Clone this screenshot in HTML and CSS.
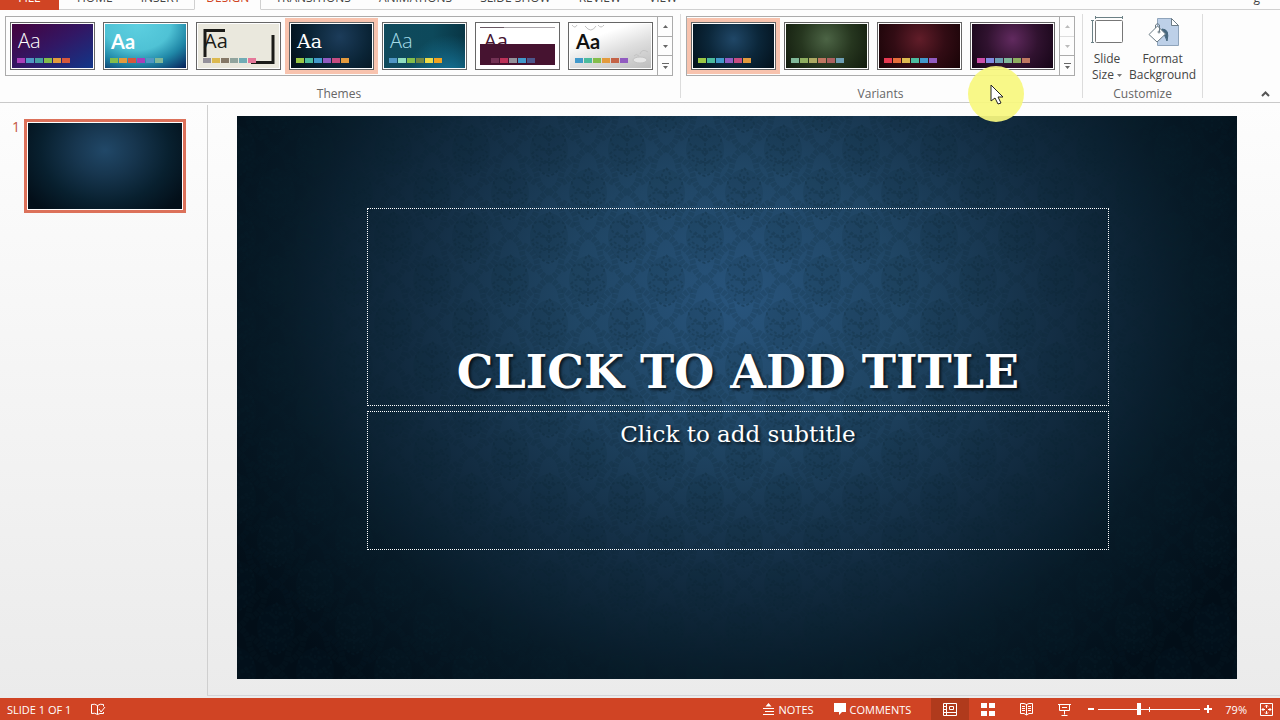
FILE: index.html
```
<!DOCTYPE html>
<html lang="en">
<head>
    <meta charset="UTF-8">
    <meta name="viewport" content="width=device-width, initial-scale=1.0">
    <title>Presentation</title>
    <link rel="stylesheet" href="styles.css">
</head>
<body>
    <nav class="tabs">
        <a href="#" class="tab file">FILE</a>
        <a href="#" class="tab">HOME</a>
        <a href="#" class="tab">INSERT</a>
        <a href="#" class="tab active">DESIGN</a>
        <a href="#" class="tab">TRANSITIONS</a>
        <a href="#" class="tab">ANIMATIONS</a>
        <a href="#" class="tab">SLIDE SHOW</a>
        <a href="#" class="tab">REVIEW</a>
        <a href="#" class="tab">VIEW</a>
        <a href="#" class="tab account">g</a>
    </nav>

    <header class="ribbon">
        <section class="group">
            <div class="gallery">
                <button class="item" aria-label="Ion Boardroom"><span class="thumb ion"><b>Aa</b><span class="swatches"><i class="c-purple"></i><i class="c-blue"></i><i class="c-teal"></i><i class="c-green"></i><i class="c-orange"></i><i class="c-red"></i></span></span></button>
                <button class="item" aria-label="Celestial"><span class="thumb sky"><b>Aa</b><span class="swatches"><i class="c-green"></i><i class="c-orange"></i><i class="c-red"></i><i class="c-purple"></i><i class="c-blue"></i><i class="c-sage"></i></span></span></button>
                <button class="item" aria-label="Frame"><span class="thumb frame"><svg class="art" viewBox="0 0 81 44"><path d="M27 6.500H7V33M53 38.500h22V11" fill="none" stroke="#1b1b18" stroke-width="3"/></svg><b>Aa</b><span class="swatches"><i class="c-gray"></i><i class="c-gold"></i><i class="c-brown"></i><i class="c-ash"></i><i class="c-aqua"></i><i class="c-rose"></i></span></span></button>
                <button class="item selected" aria-label="Damask"><span class="thumb damask"><b>Aa</b><span class="swatches"><i class="c-lime"></i><i class="c-mint"></i><i class="c-azure"></i><i class="c-violet"></i><i class="c-pink"></i><i class="c-orange"></i></span></span></button>
                <button class="item" aria-label="Depth"><span class="thumb depth"><b>Aa</b><span class="swatches"><i class="c-blue"></i><i class="c-pale"></i><i class="c-green"></i><i class="c-olive"></i><i class="c-yellow"></i><i class="c-amber"></i></span></span></button>
                <button class="item" aria-label="Dividend"><span class="thumb dividend"><b>Aa</b><svg class="art" viewBox="0 0 81 44"><path d="M3 3.500h75" stroke="#aaa5a9"/><path d="M3 3.500h24" stroke="#685762"/><path d="M3 20h75v21H3z" fill="#461330"/></svg><span class="swatches"><i class="c-plum"></i><i class="c-crimson"></i><i class="c-gray"></i><i class="c-azure"></i><i class="c-indigo"></i></span></span></button>
                <button class="item" aria-label="Droplet"><span class="thumb droplet"><svg class="art" viewBox="0 0 81 44" fill="none" stroke="#c3c3c3"><path d="M2 1q3 4 5 0M15 2q6 8 11 0M28 1q3 4 6 0M64 32q2-3 5 0M70 30q2-6 8-2"/><ellipse cx="70" cy="36" rx="7" ry="3" fill="#e6e6e6"/></svg><b>Aa</b><span class="swatches"><i class="c-azure"></i><i class="c-mint"></i><i class="c-green"></i><i class="c-orange"></i><i class="c-rust"></i><i class="c-violet"></i></span></span></button>
                <div class="scroller">
                    <button aria-label="Previous themes"><svg width="5" height="3"><path d="M0 3L2.500 0L5 3z"/></svg></button>
                    <button aria-label="Next themes"><svg width="5" height="3"><path d="M0 0h5L2.500 3z"/></svg></button>
                    <button aria-label="More themes"><svg width="7" height="6"><path d="M0 0h7v1H0zM1 3h5L3.500 6z"/></svg></button>
                </div>
            </div>
            <h2>Themes</h2>
        </section>

        <section class="group">
            <div class="gallery">
                <button class="item selected" aria-label="Blue variant"><span class="thumb v-blue"><span class="swatches"><i class="c-lime"></i><i class="c-mint"></i><i class="c-azure"></i><i class="c-violet"></i><i class="c-pink"></i><i class="c-orange"></i></span></span></button>
                <button class="item" aria-label="Green variant"><span class="thumb v-green"><span class="swatches"><i class="c-sage"></i><i class="c-moss"></i><i class="c-khaki"></i><i class="c-clay"></i><i class="c-brick"></i><i class="c-steel"></i></span></span></button>
                <button class="item" aria-label="Red variant"><span class="thumb v-red"><span class="swatches"><i class="c-scarlet"></i><i class="c-tangerine"></i><i class="c-gold"></i><i class="c-mint"></i><i class="c-azure"></i><i class="c-violet"></i></span></span></button>
                <button class="item" aria-label="Purple variant"><span class="thumb v-purple"><span class="swatches"><i class="c-magenta"></i><i class="c-peri"></i><i class="c-steel"></i><i class="c-sage"></i><i class="c-moss"></i><i class="c-clay"></i></span></span></button>
                <div class="scroller">
                    <button disabled aria-label="Previous variants"><svg width="5" height="3"><path d="M0 3L2.500 0L5 3z"/></svg></button>
                    <button disabled aria-label="Next variants"><svg width="5" height="3"><path d="M0 0h5L2.500 3z"/></svg></button>
                    <button aria-label="More variants"><svg width="7" height="6"><path d="M0 0h7v1H0zM1 3h5L3.500 6z"/></svg></button>
                </div>
            </div>
            <h2>Variants</h2>
        </section>

        <section class="group customize">
            <div class="tools">
                <button class="tool">
                    <svg width="34" height="32" viewBox="0 0 34 32" fill="none" stroke="#6b8085">
                        <rect x="5.500" y="4.500" width="27" height="22" rx="1" fill="#fff" stroke="#777"/>
                        <path d="M5 1.500h28M5.500 0v3M32.500 0v3M2.500 4v23M1 4.500h3M1 26.500h3"/>
                    </svg>
                    <span>Slide<br>Size <svg width="5" height="3"><path d="M0 0h5L2.500 3z" fill="#777"/></svg></span>
                </button>
                <button class="tool">
                    <svg width="34" height="32" viewBox="0 0 34 32" fill="none" stroke="#6b7b85">
                        <path d="M11.500 2.500h14l7 7v20h-21z" fill="#bdd0e8" stroke="#8fa4bb"/>
                        <path d="M25.500 2.500v7h7z" fill="#fff"/>
                        <path d="M16 13q8 0 5 12q-1-6-6-8z" fill="#47677e" stroke="#47677e"/>
                        <path d="M3 18.500l8.500-8.500 8 8-8.500 8z" fill="#fff"/>
                        <path d="M9.500 12V9q2-3 4 0v7"/>
                        <circle cx="13" cy="16" r="1"/>
                    </svg>
                    <span>Format<br>Background</span>
                </button>
            </div>
            <h2>Customize</h2>
        </section>
        <button class="collapse" aria-label="Collapse the ribbon"><svg width="9" height="6" viewBox="0 0 9 6"><path d="M1 5l3.500-3.500L8 5" fill="none" stroke="#555" stroke-width="2"/></svg></button>
    </header>

    <div class="workspace">
        <aside class="slides">
            <span class="number">1</span>
            <button class="preview" aria-label="Slide 1"></button>
        </aside>
        <main class="stage">
            <div class="slide">
                <svg class="pattern" width="100%" height="100%" aria-hidden="true">
                    <defs>
                        <g id="motif" fill="none" stroke="#06202c">
                            <ellipse cy="1" rx="19" ry="24" fill="#06202c" stroke="none" opacity="0.4"/>
                            <g stroke-width="2" stroke-dasharray="3 2">
                                <path d="M0-24q8 8 0 15q-8-7 0-15M0-8q12-12 16-2q1 9-16 10q-17-1-16-10q4-10 16 2M0 3q12-6 17 2q-2 9-17 8q-15 1-17-8q5-8 17-2M0 14q9-1 10 5q-3 6-10 8q-7-2-10-8q1-6 10-5"/>
                                <path d="M0-16v40M-10-4L0 6l10-10M-13 6L0 15l13-9M-7-15l7 7 7-7"/>
                            </g>
                            <path d="M-39 0q10-4 12-16q2-12 14-18M39 0q-10-4-12-16q-2-12-14-18M-39 0q10 4 12 16q2 12 14 18M39 0q-10 4-12 16q-2 12-14 18" stroke-width="6" stroke-dasharray="4 1" opacity="0.5"/>
                        </g>
                        <pattern id="damask" width="78" height="87" patternUnits="userSpaceOnUse" x="390" y="33">
                            <use href="#motif" x="39" y="43"/>
                            <use href="#motif"/>
                            <use href="#motif" x="78"/>
                            <use href="#motif" y="87"/>
                            <use href="#motif" x="78" y="87"/>
                        </pattern>
                    </defs>
                    <rect width="100%" height="100%" fill="url(#damask)" opacity="0.3"/>
                </svg>
                <div class="placeholder title"><h1>CLICK TO ADD TITLE</h1></div>
                <div class="placeholder subtitle"><p>Click to add subtitle</p></div>
            </div>
        </main>
    </div>

    <footer class="status">
        <span>SLIDE 1 OF 1</span>
        <button class="spelling" aria-label="Spelling"><svg width="15" height="13" viewBox="0 0 15 13" fill="none" stroke="#fff"><path d="M6.500 2.500Q4 .5.500 1.500v9q3.500-1 6 1zM6.500 2.500Q9 .5 12.500 1.500v2M6.500 11.500q2-1.500 6-1V9M8 6l2 3 4-5"/></svg></button>
        <div class="status-right">
            <button class="notes"><svg width="11" height="12" viewBox="0 0 11 12"><path d="M2.500 3.500L5.500 0l3 3.500zM0 5h11v1H0zM2 8h9v1H2zM0 11h11v1H0z" fill="#fff"/></svg>NOTES</button>
            <button class="comments"><svg width="12" height="12" viewBox="0 0 12 12"><path d="M0 0h12v9H8l-3 3V9H0z" fill="#fff"/></svg>COMMENTS</button>
            <div class="views">
                <button class="active" aria-label="Normal"><svg width="14" height="13" viewBox="0 0 14 13" fill="none" stroke="#fff"><path d="M.5.500h13v12H.5zM3.500 1v11M3.500 9.500h10"/><path d="M6.500 3.500h4v3h-4z"/><path d="M1 3.500h2M1 6.500h2M1 9.500h2"/></svg></button>
                <button aria-label="Slide sorter"><svg width="14" height="13" viewBox="0 0 14 13" fill="#fff"><path d="M0 0h6v5H0zM8 0h6v5H8zM0 8h6v5H0zM8 8h6v5H8z"/></svg></button>
                <button aria-label="Reading view"><svg width="13" height="13" viewBox="0 0 13 13" fill="none" stroke="#fff"><path d="M6.500 1.500L4 .5H.5v10H4l2.500 1.500L9 10.500h3.500V.5H9zM6.500 1v11M2 3.500h3M2 5.500h3M2 7.500h3M8 3.500h3M8 5.500h3M8 7.500h3"/></svg></button>
                <button aria-label="Slide show"><svg width="13" height="13" viewBox="0 0 13 13" fill="none" stroke="#fff"><path d="M0 1.500h13M1.500 2v5.500h10V2M6.500 7.500v4M3.500 12.500h6M4 4.500h5"/></svg></button>
            </div>
            <button class="step" aria-label="Zoom out"><svg width="6" height="10"><path d="M0 4h6v2H0z" fill="#fff"/></svg></button>
            <input type="range" class="zoom" min="0" max="100" value="39" aria-label="Zoom">
            <button class="step" aria-label="Zoom in"><svg width="8" height="8"><path d="M0 3h3V0h2v3h3v2H5v3H3V5H0z" fill="#fff"/></svg></button>
            <button class="percent">79%</button>
            <button class="fit" aria-label="Fit slide to window"><svg width="13" height="13" viewBox="0 0 13 13" fill="none" stroke="#fff"><path d="M.5.500h12v12H.5zM6.500 2v3M6.500 8v3M2 6.500h3M8 6.500h3M5 3.500l1.500-1.500 1.500 1.500M5 9.500l1.500 1.500 1.500-1.500M3.500 5l-1.500 1.500 1.500 1.500M9.500 5l1.500 1.500-1.500 1.500"/></svg></button>
        </div>
    </footer>

    <div class="pointer">
        <svg width="56" height="56" viewBox="0 0 56 56">
            <circle cx="28" cy="28" r="28" fill="#f8f77f" opacity="0.93"/>
            <path d="M23 19v16l4-3 3 6 3-1-3-6h5z" fill="#fff" stroke="#222"/>
        </svg>
    </div>
</body>
</html>
```

FILE: styles.css
```
* {
    box-sizing: border-box;
}

body {
    display: flex;
    flex-direction: column;
    min-height: 100vh;
    margin: 0;
    font-family: "Open Sans", "Noto Sans", sans-serif;
    font-size: 12px;
    color: #444;
    background-color: #fdfdfd;
}

button {
    padding: 0;
    border: none;
    background: none;
    font: inherit;
    color: inherit;
}

svg {
    display: block;
}

/* Ribbon tabs, scrolled up so only the bottom edge is left */
.tabs {
    display: flex;
    align-items: flex-end;
    height: 10px;
    overflow: hidden;
}

.tab {
    height: 24px;
    padding: 0 14px;
    border-bottom: 1px solid #d0d0d0;
    line-height: 24px;
    color: #444;
    text-decoration: none;
}

.tab.file {
    width: 59px;
    padding: 0;
    text-align: center;
    background-color: #d04424;
    border-color: #d04424;
    color: #fff;
}

.tab.file + .tab {
    padding-left: 18px;
}

.tab.active {
    padding: 0 11px;
    border-left: 1px solid #d0d0d0;
    border-right: 1px solid #d0d0d0;
    border-bottom-color: #fdfdfd;
    color: #d04424;
}

.tab.account {
    flex: 1;
    padding-right: 20px;
    text-align: right;
}

/* Ribbon */
.ribbon {
    display: flex;
    align-items: flex-start;
    height: 93px;
    padding-top: 4px;
    border-bottom: 1px solid #c9c9c9;
}

.group {
    height: 84px;
    padding: 2px 7px 0 5px;
    border-right: 1px solid #dcdcdc;
}

.group h2 {
    margin: 9px 0 0;
    font-size: 12px;
    font-weight: normal;
    line-height: 18px;
    text-align: center;
    color: #666;
}

.gallery {
    display: flex;
    height: 60px;
    border: 1px solid #ababab;
}

.item {
    width: 93px;
    height: 56px;
    margin-top: 1px;
    padding: 4px;
}

.item.selected {
    background-color: #f8c3ae;
}

.thumb {
    display: block;
    position: relative;
    height: 48px;
    padding: 4px 5px 0;
    border: 1px solid #666;
    box-shadow: inset 0 0 0 1px #fff;
    text-align: left;
}

.thumb b {
    display: block;
    height: 28px;
    padding-left: 2px;
    font-family: "Open Sans", sans-serif;
    font-size: 20px;
    font-weight: normal;
    line-height: 28px;
    color: #fff;
}

.art {
    position: absolute;
    top: 1px;
    left: 1px;
    width: 81px;
    height: 44px;
}

.swatches {
    position: absolute;
    left: 6px;
    bottom: 6px;
    display: flex;
    gap: 1px;
}

.swatches i {
    width: 8px;
    height: 5px;
}

.ion { background: linear-gradient(150deg, #430644 10%, #321764 50%, #10378a); }
.ion b { font-weight: 300; }
.sky { background: radial-gradient(ellipse 90% 120% at 40% 5%, #5ccfe0, #4fc2d5 45%, #1f86a6 70%, #07235b); }
.sky b,
.droplet b { font-family: Lato, sans-serif; font-weight: bold; }
.frame { background-color: #eae8dd; }
.frame b { position: relative; color: #1b1b18; }
.damask { background: radial-gradient(circle at 60% 30%, #1c3c5a, #0a2436 50%, #020d16); }
.damask b { font-family: "DejaVu Serif", serif; font-size: 19px; }
.depth { background: radial-gradient(circle at 80% 120%, #16799f, transparent 50%), linear-gradient(90deg, #104a5c, #0d495b 60%, #083544); }
.depth b { font-weight: 300; color: #a4dce8; }
.dividend { background-color: #fff; }
.dividend b { padding-left: 3px; color: #461330; }
.dividend .swatches { left: 15px; }
.droplet { background: linear-gradient(160deg, #fff 30%, #dedede 60%, #bcbcbc); }
.droplet b { color: #111; }
.v-blue { background: radial-gradient(circle at 50% 35%, #204767, #0b2639 50%, #020f19); }
.v-green { background: radial-gradient(circle at 50% 35%, #4c6445, #26361f 50%, #10190c); }
.v-red { background: radial-gradient(circle at 50% 35%, #611d29, #320c14 50%, #170306); }
.v-purple { background: radial-gradient(circle at 50% 35%, #612a5f, #30122f 50%, #140415); }

.c-purple { background-color: #a83fb8; }
.c-blue { background-color: #4f96c4; }
.c-teal { background-color: #459fa0; }
.c-green { background-color: #83bd4b; }
.c-orange { background-color: #e39a3d; }
.c-red { background-color: #d5573c; }
.c-sage { background-color: #80b798; }
.c-gray { background-color: #94919a; }
.c-gold { background-color: #dcb94f; }
.c-brown { background-color: #857867; }
.c-ash { background-color: #91a49d; }
.c-aqua { background-color: #70acb5; }
.c-rose { background-color: #e57899; }
.c-lime { background-color: #9bc744; }
.c-mint { background-color: #4bbb9d; }
.c-azure { background-color: #4199cb; }
.c-violet { background-color: #915bc0; }
.c-pink { background-color: #c64c80; }
.c-pale { background-color: #8fdec0; }
.c-olive { background-color: #718744; }
.c-yellow { background-color: #edda48; }
.c-amber { background-color: #f0a321; }
.c-plum { background-color: #733154; }
.c-crimson { background-color: #bd3158; }
.c-indigo { background-color: #4c568c; }
.c-rust { background-color: #c46246; }
.c-moss { background-color: #8eae60; }
.c-khaki { background-color: #adaa62; }
.c-clay { background-color: #bf7761; }
.c-brick { background-color: #ac6160; }
.c-steel { background-color: #6d9fb4; }
.c-scarlet { background-color: #e53850; }
.c-tangerine { background-color: #e66e3b; }
.c-magenta { background-color: #cb4ea7; }
.c-peri { background-color: #808ae1; }

.scroller {
    display: flex;
    flex-direction: column;
    width: 15px;
    border-left: 1px solid #ababab;
}

.scroller button {
    display: flex;
    flex: 1;
    align-items: center;
    justify-content: center;
    fill: #666;
}

.scroller button + button {
    border-top: 1px solid #ababab;
}

.scroller button:disabled {
    fill: #bbb;
}

.scroller button:disabled + button:disabled {
    border-color: #ddd;
}

.customize {
    padding: 2px 6px 0;
}

.tools {
    display: flex;
    gap: 4px;
    height: 67px;
}

.customize h2 {
    margin-top: 2px;
}

.tool {
    display: flex;
    flex-direction: column;
    align-items: center;
    min-width: 36px;
    line-height: 16px;
}

.tool span {
    margin-top: 3px;
}

.tool span svg {
    display: inline-block;
    vertical-align: middle;
}

.collapse {
    margin: 77px 10px 0 auto;
}

/* Slide list and editing area */
.workspace {
    display: flex;
    flex: 1;
    background: linear-gradient(#fdfdfd, #ebebeb);
}

.slides {
    display: flex;
    align-items: flex-start;
    width: 207px;
    padding: 16px 21px 0 12px;
}

.number {
    width: 12px;
    font-size: 14px;
    line-height: 15px;
    color: #c4553f;
}

.preview {
    flex: 1;
    height: 94px;
    border: 3px solid #dc715a;
    box-shadow: inset 0 0 0 1px #fff;
    background: radial-gradient(ellipse 55% 80% at 50% 32%, #214868, #17364f 35%, #08202f 75%, #030f19 110%);
}

.stage {
    flex: 1;
    margin: 2px 0;
    padding: 11px 43px 16px 29px;
    border-left: 1px solid #cfcfcf;
    border-bottom: 1px solid #d4d4d8;
}

.slide {
    display: flex;
    flex-direction: column;
    position: relative;
    aspect-ratio: 1000 / 563;
    padding: 9.2% 12.8% 0 13%;
    background: radial-gradient(ellipse 54% 80% at 50% 33%, #28547c, #204665 30%, #132d43 60%, #071a27 85%, #020e18 110%);
    color: #fff;
}

.pattern {
    position: absolute;
    inset: 0;
}

.placeholder {
    position: relative;
    border: 1px dotted #fff;
    text-align: center;
    text-shadow: 2px 2px 3px rgba(0, 0, 0, 0.7);
}

.title {
    display: flex;
    align-items: flex-end;
    justify-content: center;
    height: 198px;
}

.title h1 {
    margin: 0 0 3px;
    font-family: "DejaVu Serif", serif;
    font-size: 46px;
    line-height: 60px;
}

.subtitle {
    height: 139px;
    margin-top: 5px;
}

.subtitle p {
    margin: 6px 0;
    font-family: "DejaVu Serif", serif;
    font-size: 23px;
    line-height: 32px;
}

/* Status bar */
.status {
    display: flex;
    align-items: center;
    height: 22px;
    padding: 0 7px;
    font-size: 11px;
    background-color: #d04424;
    color: #fff;
}

.spelling {
    margin-left: 20px;
}

.status-right {
    display: flex;
    align-items: center;
    margin-left: auto;
}

.notes,
.comments {
    display: flex;
    align-items: center;
    gap: 5px;
    margin-right: 20px;
}

.comments {
    gap: 4px;
}

.views {
    display: flex;
    margin-right: 5px;
}

.views button {
    display: flex;
    align-items: center;
    justify-content: center;
    width: 38px;
    height: 22px;
}

.views .active {
    background-color: #b03a1c;
}

.zoom {
    appearance: none;
    width: 102px;
    height: 12px;
    margin: 0 4px;
    background: linear-gradient(#fff, #fff) 51px 4px / 1px 5px no-repeat, linear-gradient(#fff, #fff) 0 6px / 100% 1px no-repeat;
}

.zoom::-webkit-slider-thumb {
    appearance: none;
    width: 4px;
    height: 12px;
    background-color: #fff;
}

.percent {
    margin-left: 13px;
}

.fit {
    margin-left: 13px;
}

/* Mouse pointer with its highlight */
.pointer {
    position: absolute;
    top: 66px;
    left: 968px;
    pointer-events: none;
}
```
